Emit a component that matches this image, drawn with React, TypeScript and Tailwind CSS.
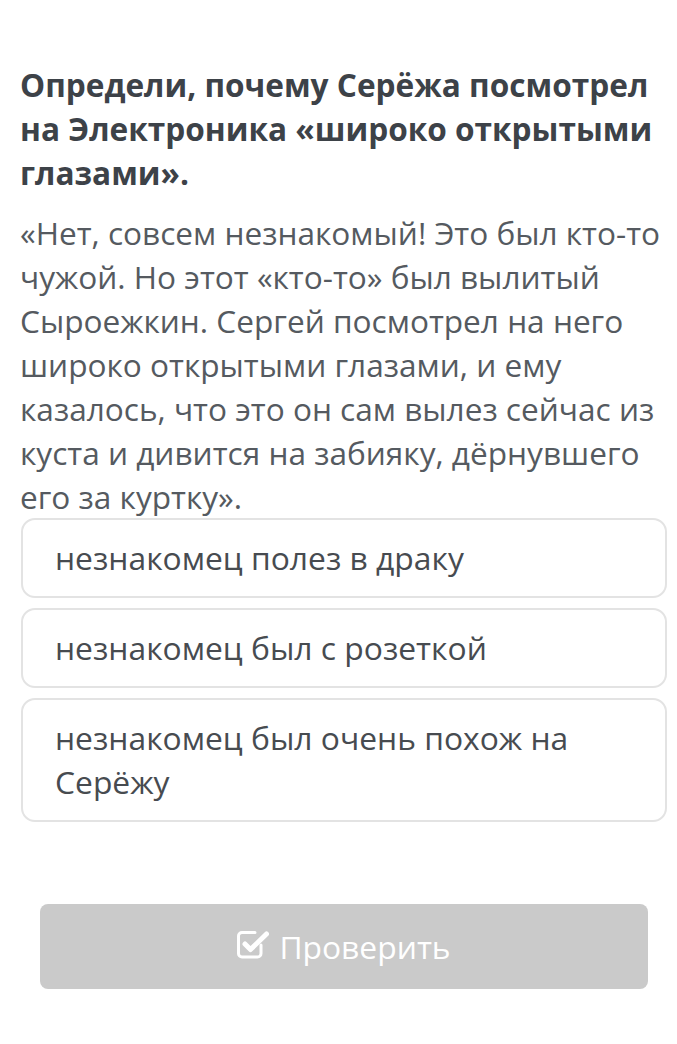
const options = [
  "незнакомец полез в драку",
  "незнакомец был с розеткой",
  "незнакомец был очень похож на Серёжу",
];

const CheckSquareIcon = () => (
  <svg width="32" height="31" viewBox="0 0 32 31" fill="none" className="mr-[10px] mb-[4px]">
    <path
      d="M24 16v8.5a3.5 3.5 0 0 1-3.5 3.5H5a3.5 3.5 0 0 1-3.5-3.5V7A3.5 3.5 0 0 1 5 3.5H18"
      stroke="white"
      strokeWidth="3"
      strokeLinecap="round"
    />
    <path
      d="M8 15l5.5 5.5L29.5 5"
      stroke="white"
      strokeWidth="5"
      strokeLinecap="round"
      strokeLinejoin="round"
    />
  </svg>
);

const App = () => {
  return (
    <div
      className="w-[677px] h-[1044px] bg-white overflow-hidden"
      style={{ fontFamily: '"Open Sans", "Noto Sans", sans-serif' }}
    >
      <div className="pt-[63px] pl-[20px] pr-[10px]">
        {/* Question */}
        <h1 className="text-[31.6px] leading-[44px] font-bold text-[#3d4248]">
          Определи, почему Серёжа посмотрел на Электроника «широко открытыми
          глазами».
        </h1>

        {/* Passage */}
        <p className="mt-[16px] text-[31.6px] leading-[44px] text-[#555a60]">
          «Нет, совсем незнакомый! Это был кто-то чужой. Но этот «кто-то» был
          вылитый Сыроежкин. Сергей посмотрел на него широко открытыми
          глазами, и ему казалось, что это он сам вылез сейчас из куста и
          дивится на забияку, дёрнувшего его за куртку».
        </p>

        {/* Answers */}
        <div className="ml-[1px] mt-[-1px] flex flex-col gap-[10px]">
          {options.map((opt) => (
            <div
              key={opt}
              className="border-2 border-[#e3e3e3] rounded-[14px] pl-[32px] pr-[40px] py-[16px] text-[31.8px] leading-[44px] text-[#474b50]"
            >
              {opt}
            </div>
          ))}
        </div>
      </div>

      {/* Submit */}
      <div className="pl-[40px] pr-[29px] mt-[82px]">
        <button className="w-full h-[85px] rounded-[8px] bg-[#cacaca] flex items-center justify-center text-white text-[31.8px]">
          <CheckSquareIcon />
          Проверить
        </button>
      </div>
    </div>
  );
};

export default App;
